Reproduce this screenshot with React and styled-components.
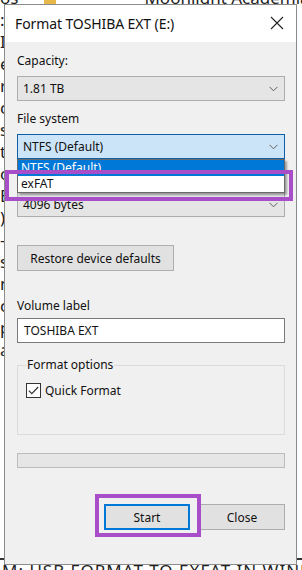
import React from "react";
import styled, { createGlobalStyle } from "styled-components";

const GlobalStyle = createGlobalStyle`
  html, body { margin: 0; padding: 0; }
  body {
    width: 302px;
    height: 570px;
    overflow: hidden;
    background: #ffffff;
    font-family: "Noto Sans", "Liberation Sans", sans-serif;
  }
`;

const Stage = styled.div`
  display: grid;
  width: 302px;
  height: 570px;
  overflow: hidden;
  & > * { grid-area: 1 / 1; }
`;

const Backdrop = styled.div`
  display: flex;
  flex-direction: column;
  margin-top: -13px;
  font-family: "Noto Sans", sans-serif;
  font-size: 17px;
  line-height: 22px;
  color: #222;
  white-space: nowrap;
`;

const DocLine = styled.div`
  padding-left: ${(p) => p.$indent || 0}px;
`;

const FinalLine = styled.div`
  margin-top: auto;
  margin-bottom: -12px;
  border-top: 2px solid #333;
  padding-left: 2px;
  letter-spacing: 1px;
`;

const Folder = styled.span`
  display: inline-block;
  width: 12px;
  height: 14px;
  background: #e8b84a;
  margin: 0 10px 0 26px;
  vertical-align: middle;
`;

const Heading = styled.span`
  margin-left: 78px;
`;

const Window = styled.div`
  position: relative;
  align-self: start;
  margin: 4px 0 0 4px;
  width: 293px;
  height: 561px;
  box-sizing: border-box;
  border: 1px solid #8c8c8c;
  display: flex;
  flex-direction: column;
  background: #f0f0f0;
  z-index: 1;
`;

const TitleBar = styled.div`
  height: 37px;
  flex: none;
  background: #ffffff;
  display: flex;
  align-items: center;
  justify-content: space-between;
  padding: 0 12px 0 10px;
`;

const Title = styled.span`
  font-size: 14px;
  color: #111;
  letter-spacing: -0.1px;
`;

const CloseGlyph = styled.svg`
  width: 14px;
  height: 14px;
  margin-top: -1px;
`;

const Body = styled.div`
  flex: 1;
  display: flex;
  flex-direction: column;
  padding: 11px 11px 0 12px;
  font-size: 12px;
  color: #111;
`;

const Label = styled.div`
  line-height: 16px;
  height: 16px;
  margin-top: ${(p) => p.$before ?? 0}px;
  margin-bottom: ${(p) => p.$gap ?? 7}px;
`;

const Field = styled.div`
  position: relative;
  display: flex;
  flex-direction: column;
  margin-bottom: ${(p) => p.$after ?? 10}px;
`;

const Select = styled.div`
  height: 25px;
  box-sizing: border-box;
  display: flex;
  align-items: center;
  justify-content: space-between;
  padding: 0 6px 0 5px;
  background: ${(p) => (p.$focused ? "#cce4f7" : "#e5e5e5")};
  border: 1px solid ${(p) => (p.$focused ? "#0d5fa8" : "#adadad")};
`;

const Chevron = styled.svg`
  width: 9px;
  height: 6px;
`;

const DropList = styled.div`
  position: absolute;
  top: 100%;
  left: 0;
  right: 0;
  background: #fff;
  border: 1px solid #6a6a6a;
  box-shadow: 2px 2px 2px rgba(0, 0, 0, 0.35);
  display: flex;
  flex-direction: column;
  z-index: 2;
`;

const DropItem = styled.div`
  height: 16px;
  line-height: 16px;
  padding-left: 3px;
  background: ${(p) => (p.$active ? "#0078d7" : "#fff")};
  color: ${(p) => (p.$active ? "#fff" : "#111")};
`;

const Button = styled.div`
  height: 26px;
  box-sizing: border-box;
  width: ${(p) => p.$w}px;
  display: flex;
  align-items: center;
  justify-content: center;
  background: #e1e1e1;
  border: ${(p) => (p.$default ? "2px solid #0078d7" : "1px solid #adadad")};
`;

const TextInput = styled.div`
  height: 25px;
  box-sizing: border-box;
  background: #fff;
  border: 1px solid #7a7a7a;
  display: flex;
  align-items: center;
  padding-left: 6px;
`;

const GroupBox = styled.fieldset`
  margin: 14px 0 0 0;
  padding: 9px 8px 0 8px;
  height: 78px;
  box-sizing: border-box;
  border: 1px solid #dcdcdc;
  min-width: 0;
`;

const Legend = styled.legend`
  padding: 0 1px;
  font-size: 12px;
  line-height: 16px;
  color: #111;
`;

const CheckRow = styled.label`
  display: flex;
  align-items: center;
  gap: 4px;
`;

const CheckBox = styled.span`
  width: 15px;
  height: 15px;
  box-sizing: border-box;
  border: 1px solid #333;
  background: #fff;
  display: flex;
  align-items: center;
  justify-content: center;
`;

const Progress = styled.div`
  margin-top: 18px;
  height: 15px;
  box-sizing: border-box;
  background: #e6e6e6;
  border: 1px solid #bcbcbc;
`;

const ButtonRow = styled.div`
  margin-top: 36px;
  display: flex;
  justify-content: flex-end;
  gap: 9px;
`;

const Highlight = styled.div`
  position: absolute;
  left: ${(p) => p.$x}px;
  top: ${(p) => p.$y}px;
  width: ${(p) => p.$w}px;
  height: ${(p) => p.$h}px;
  box-sizing: border-box;
  border: 4px solid #a84ec9;
  z-index: 3;
  pointer-events: none;
`;

const Arrow = () => (
  <Chevron viewBox="0 0 9 6">
    <path d="M0.5 0.8 L4.5 4.8 L8.5 0.8" fill="none" stroke="#606060" strokeWidth="1" />
  </Chevron>
);

export default function App() {
  return (
    <>
      <GlobalStyle />
      <Stage>
        <Backdrop>
          <DocLine>
            os<Folder />
            <Heading>Moonlight Academia</Heading>
          </DocLine>
          <DocLine>:</DocLine>
          <DocLine>I</DocLine>
          <DocLine>e</DocLine>
          <DocLine>r</DocLine>
          <DocLine>c</DocLine>
          <DocLine>s</DocLine>
          <DocLine>t</DocLine>
          <DocLine>o</DocLine>
          <DocLine>B</DocLine>
          <DocLine>)</DocLine>
          <DocLine>-</DocLine>
          <DocLine>s</DocLine>
          <DocLine>n</DocLine>
          <DocLine>c</DocLine>
          <DocLine>p</DocLine>
          <DocLine>a</DocLine>
          <FinalLine>M: USB FORMAT TO EXFAT IN WINDOWS 10 FOR MAC</FinalLine>
        </Backdrop>

        <Window>
          <TitleBar>
            <Title>Format TOSHIBA EXT (E:)</Title>
            <CloseGlyph viewBox="0 0 14 14">
              <path d="M1 1 L13 13 M13 1 L1 13" stroke="#222" strokeWidth="1.1" />
            </CloseGlyph>
          </TitleBar>
          <Body>
            <Label>Capacity:</Label>
            <Field>
              <Select>
                <span>1.81 TB</span>
                <Arrow />
              </Select>
            </Field>

            <Label>File system</Label>
            <Field>
              <Select $focused>
                <span>NTFS (Default)</span>
                <Arrow />
              </Select>
              <DropList>
                <DropItem $active>NTFS (Default)</DropItem>
                <DropItem>exFAT</DropItem>
              </DropList>
            </Field>

            <Label aria-hidden="true" />
            <Field $after={28}>
              <Select>
                <span>4096 bytes</span>
                <Arrow />
              </Select>
            </Field>

            <Button $w={157}>Restore device defaults</Button>

            <Label $before={27} $gap={4}>
              Volume label
            </Label>
            <TextInput>TOSHIBA EXT</TextInput>

            <GroupBox>
              <Legend>Format options</Legend>
              <CheckRow>
                <CheckBox>
                  <svg width="11" height="9" viewBox="0 0 11 9">
                    <path d="M0.8 4.6 L3.8 7.6 L10.2 1" fill="none" stroke="#333" strokeWidth="1.2" />
                  </svg>
                </CheckBox>
                Quick Format
              </CheckRow>
            </GroupBox>

            <Progress />

            <ButtonRow>
              <Button $w={86} $default>
                Start
              </Button>
              <Button $w={86}>Close</Button>
            </ButtonRow>
          </Body>
          <Highlight $x={0} $y={165} $w={288} $h={31} />
          <Highlight $x={90} $y={489} $w={106} $h={43} />
        </Window>
      </Stage>
    </>
  );
}
